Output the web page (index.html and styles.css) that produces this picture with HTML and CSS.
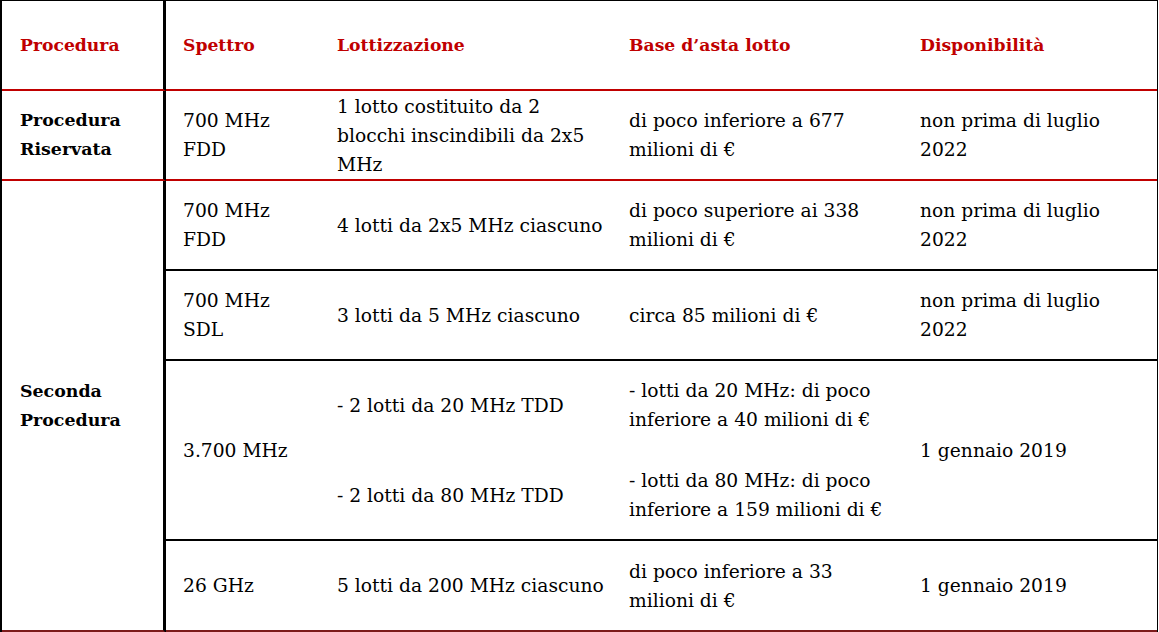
FILE: index.html
```html
<!DOCTYPE html>
<html lang="it">
<head>
<meta charset="utf-8">
<title>Procedure</title>
<link rel="stylesheet" href="styles.css">
</head>
<body>
<table class="grid">
  <colgroup>
    <col class="c1"><col class="c2"><col class="c3"><col class="c4"><col class="c5">
  </colgroup>
  <thead>
    <tr class="head">
      <th class="first">Procedura</th>
      <th>Spettro</th>
      <th>Lottizzazione</th>
      <th>Base d’asta lotto</th>
      <th>Disponibilità</th>
    </tr>
  </thead>
  <tbody>
    <tr class="r1">
      <td class="first proc">Procedura<br>Riservata</td>
      <td>700 MHz<br>FDD</td>
      <td>1 lotto costituito da 2<br>blocchi inscindibili da 2x5<br>MHz</td>
      <td>di poco inferiore a 677<br>milioni di €</td>
      <td>non prima di luglio<br>2022</td>
    </tr>
    <tr class="r2 mid">
      <td class="first proc last" rowspan="4">Seconda<br>Procedura</td>
      <td>700 MHz<br>FDD</td>
      <td>4 lotti da 2x5 MHz ciascuno</td>
      <td>di poco superiore ai 338<br>milioni di €</td>
      <td>non prima di luglio<br>2022</td>
    </tr>
    <tr class="r3 mid">
      <td>700 MHz<br>SDL</td>
      <td>3 lotti da 5 MHz ciascuno</td>
      <td>circa 85 milioni di €</td>
      <td>non prima di luglio<br>2022</td>
    </tr>
    <tr class="r4 mid">
      <td>3.700 MHz</td>
      <td>
        <div class="subs">
          <div class="sub">- 2 lotti da 20 MHz TDD</div>
          <div class="sub">- 2 lotti da 80 MHz TDD</div>
        </div>
      </td>
      <td>
        <div class="subs">
          <div class="sub">- lotti da 20 MHz: di poco<br>inferiore a 40 milioni di €</div>
          <div class="sub">- lotti da 80 MHz: di poco<br>inferiore a 159 milioni di €</div>
        </div>
      </td>
      <td>1 gennaio 2019</td>
    </tr>
    <tr class="r5">
      <td class="last">26 GHz</td>
      <td class="last">5 lotti da 200 MHz ciascuno</td>
      <td class="last">di poco inferiore a 33<br>milioni di €</td>
      <td class="last">1 gennaio 2019</td>
    </tr>
  </tbody>
</table>
</body>
</html>
```

FILE: styles.css
```css
html, body {
  margin: 0;
  padding: 0;
  background: #ffffff;
}

.grid {
  width: 1158px;
  border-collapse: separate;
  border-spacing: 0;
  table-layout: fixed;
  border-top: 1px solid #000;
  border-left: 2px solid #000;
  border-right: 1px solid #000;
  font-family: "DejaVu Serif", serif;
  font-size: 18.7px;
  line-height: 29px;
  color: #000;
}

.c1 { width: 164px; }
.c2 { width: 154px; }
.c3 { width: 292px; }
.c4 { width: 291px; }
.c5 { width: auto; }

.grid th,
.grid td {
  padding: 0 0 0 17px;
  text-align: left;
  vertical-align: middle;
  box-sizing: border-box;
}

.grid th {
  color: #c00000;
  font-weight: bold;
  font-size: 17.2px;
  border-bottom: 2px solid #c00000;
}

.grid .first {
  border-right: 3px solid #000;
  padding-left: 18px;
}

.grid .proc {
  font-weight: bold;
  font-size: 17.4px;
  color: #000;
}

.head { height: 90px; }

.r1 { height: 90px; }
.r1 td { border-bottom: 2px solid #c00000; }

.r2 { height: 90px; }
.r3 { height: 90px; }
.r4 { height: 180px; }
.r5 { height: 92px; }

.mid td { border-bottom: 2px solid #000; }
.grid td.last { border-bottom: 3px solid #7c1a1a; }

.subs {
  display: flex;
  flex-direction: column;
  gap: 32px;
}

.sub {
  min-height: 58px;
  display: flex;
  align-items: center;
}
```
